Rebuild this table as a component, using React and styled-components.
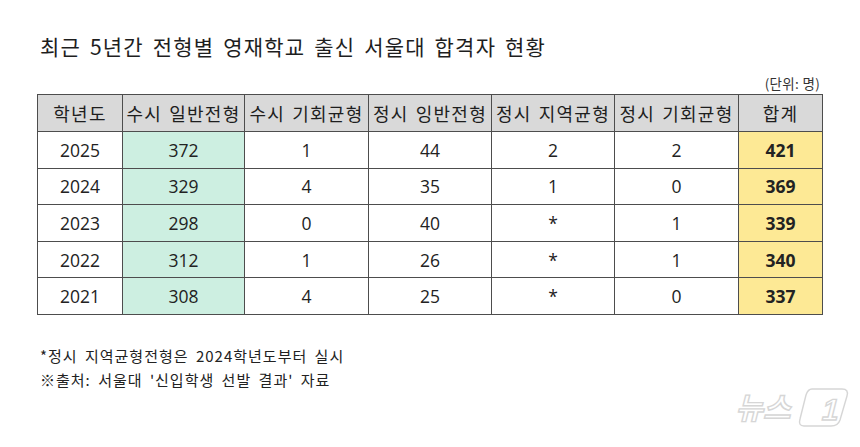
import React from "react";
import styled, { createGlobalStyle } from "styled-components";

const GlobalStyle = createGlobalStyle`
  html, body {
    margin: 0;
    padding: 0;
    background: #ffffff;
  }
  body {
    font-family: "Noto Sans CJK KR", "Noto Sans", sans-serif;
    color: #222222;
  }
`;

const Page = styled.div`
  position: relative;
  width: 860px;
  height: 447px;
  box-sizing: border-box;
  padding: 31px 0 0 37px;
  background: #ffffff;
  overflow: hidden;
`;

const Title = styled.h1`
  margin: 0 0 0 3px;
  font-size: 21px;
  font-weight: 400;
  line-height: 30px;
  letter-spacing: 1.2px;
  word-spacing: 3px;
  color: #1e1e1e;
`;

const Unit = styled.div`
  width: 785px;
  margin-top: 13px;
  text-align: right;
  font-size: 13.5px;
  line-height: 18px;
  letter-spacing: 0.3px;
  color: #333;
  padding-right: 2px;
  box-sizing: border-box;
`;

const Table = styled.table`
  margin-top: 2px;
  width: 785px;
  border-collapse: collapse;
  table-layout: fixed;
  border: 1px solid #4d4d4d;
`;

const HeadCell = styled.th`
  height: 36px;
  padding: 0;
  background: #d9d9d9;
  border: 1px solid #4d4d4d;
  font-size: 18px;
  font-weight: 400;
  letter-spacing: 1.2px;
  word-spacing: 2px;
  color: #1e1e1e;
  text-align: center;
  white-space: nowrap;
`;

const tones = {
  plain: "#ffffff",
  green: "#cdefe1",
  yellow: "#fde995",
};

const Cell = styled.td`
  height: 35.6px;
  padding: 0;
  background: ${(p) => tones[p.$tone || "plain"]};
  border: 1px solid #4d4d4d;
  font-family: "Open Sans", "Noto Sans CJK KR", sans-serif;
  font-size: 17.5px;
  font-weight: ${(p) => (p.$bold ? 700 : 400)};
  color: #222;
  text-align: center;
`;

const Notes = styled.div`
  margin: 29px 0 0 3px;
  font-size: 15px;
  line-height: 24px;
  letter-spacing: 1px;
  word-spacing: 3px;
  color: #222;
`;

const Watermark = styled.div`
  position: absolute;
  right: 10px;
  bottom: 13px;
  opacity: 0.9;
`;

const widths = [85, 122, 124, 123, 123, 124, 84];
const heads = [
  "학년도",
  "수시 일반전형",
  "수시 기회균형",
  "정시 잉반전형",
  "정시 지역균형",
  "정시 기회균형",
  "합계",
];

const rows = [
  ["2025", "372", "1", "44", "2", "2", "421"],
  ["2024", "329", "4", "35", "1", "0", "369"],
  ["2023", "298", "0", "40", "*", "1", "339"],
  ["2022", "312", "1", "26", "*", "1", "340"],
  ["2021", "308", "4", "25", "*", "0", "337"],
];

const NewsLogo = () => (
  <svg width="118" height="44" viewBox="0 0 118 44">
    <g fill="none" stroke="#d2d2d2" strokeWidth="1.4">
      <text
        x="4"
        y="34"
        fontFamily="'Noto Sans CJK KR', sans-serif"
        fontSize="30"
        fontWeight="700"
        transform="skewX(-14) translate(8 0)"
        fill="#ffffff"
      >
        뉴스
      </text>
      <path d="M80 4 H110 Q117 4 115 11 L108 35 Q106 41 99 41 H72 Q66 41 68 34 L74 10 Q76 4 80 4 Z" />
      <text
        x="88"
        y="35"
        fontFamily="'Liberation Sans', sans-serif"
        fontSize="30"
        fontWeight="700"
        transform="skewX(-14) translate(9 0)"
        fill="#ffffff"
      >
        1
      </text>
    </g>
  </svg>
);

export default function App() {
  return (
    <>
      <GlobalStyle />
      <Page>
        <Title>최근 5년간 전형별 영재학교 출신 서울대 합격자 현황</Title>
        <Unit>(단위: 명)</Unit>
        <Table>
          <colgroup>
            {widths.map((w, i) => (
              <col key={i} style={{ width: w }} />
            ))}
          </colgroup>
          <thead>
            <tr>
              {heads.map((h) => (
                <HeadCell key={h}>{h}</HeadCell>
              ))}
            </tr>
          </thead>
          <tbody>
            {rows.map((r) => (
              <tr key={r[0]}>
                {r.map((v, i) => (
                  <Cell
                    key={i}
                    $tone={i === 1 ? "green" : i === 6 ? "yellow" : "plain"}
                    $bold={i === 6}
                  >
                    {v}
                  </Cell>
                ))}
              </tr>
            ))}
          </tbody>
        </Table>
        <Notes>
          <div>*정시 지역균형전형은 2024학년도부터 실시</div>
          <div>※출처: 서울대 '신입학생 선발 결과' 자료</div>
        </Notes>
        <Watermark>
          <NewsLogo />
        </Watermark>
      </Page>
    </>
  );
}
